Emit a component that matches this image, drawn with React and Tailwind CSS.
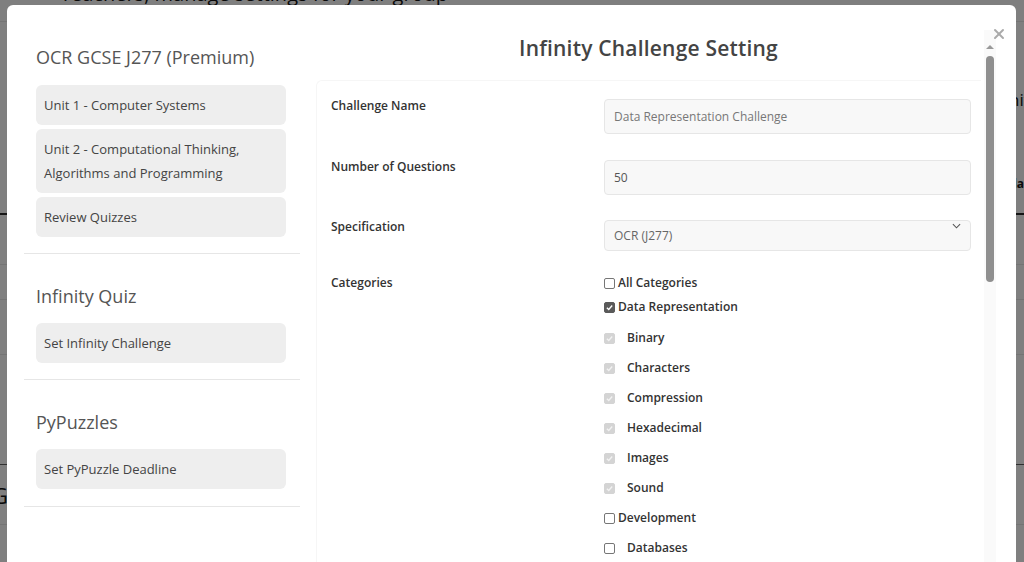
import { X } from "lucide-react";

const font = { fontFamily: '"Open Sans", "Noto Sans", sans-serif' };

function SideButton({ children }) {
    return (
        <div className="bg-[#eeeeee] rounded-md px-2 py-[8px] text-[13px] leading-[24px] text-[#444]">
            {children}
        </div>
    );
}

function Check({ state }) {
    // state: "off" | "on" | "disabled"
    let box = "border border-[#767676] bg-white";
    if (state === "on") box = "bg-[#5a5a5a] border border-[#5a5a5a]";
    if (state === "disabled") box = "bg-[#d4d4d4] border border-[#d4d4d4]";
    return (
        <span className={`w-[11px] h-[11px] rounded-[2px] flex items-center justify-center shrink-0 ${box}`}>
            {state !== "off" && (
                <svg viewBox="0 0 12 12" className="w-[9px] h-[9px]">
                    <path d="M2.5 6.2 L5 8.6 L9.6 3.4" fill="none" stroke={state === "on" ? "#fff" : "#f2f2f2"} strokeWidth="1.8" />
                </svg>
            )}
        </span>
    );
}

function CategoryRow({ label, state, sub, className = "h-[24px]" }) {
    return (
        <label className={`flex items-center ${className}`}>
            <Check state={state} />
            <span className={`text-[12px] font-semibold text-[#333] ${sub ? "ml-[12px]" : "ml-[3px]"}`}>
                {label}
            </span>
        </label>
    );
}

function Field({ label, children }) {
    return (
        <div className="flex items-start">
            <div className="w-[273px] text-[12px] leading-[14px] font-semibold text-[#333]">{label}</div>
            <div className="w-[367px]">{children}</div>
        </div>
    );
}

export default function App() {
    const subs = ["Binary", "Characters", "Compression", "Hexadecimal", "Images", "Sound"];

    return (
        <div className="relative w-[1024px] h-[562px] overflow-hidden bg-[#7f7f7f]" style={font}>
            {/* dimmed page behind the modal, each band painted grey */}
            <div className="h-[562px] overflow-hidden text-[#0a0a0a] flex flex-col">
                <div className="h-[22px] shrink-0 bg-[#7f7f7f] border-b border-[#747474] overflow-hidden">
                    <div className="px-[60px] -mt-[16px] text-[20px] leading-[20px]">
                        Teachers, manage settings for your group
                    </div>
                </div>
                <div className="h-[193px] shrink-0 bg-[#7f7f7f] border-b-2 border-[#151515] flex flex-col items-end">
                    <div className="mt-[66px] -mr-[14px] text-[17px] leading-[24px]">Units</div>
                    <div className="mt-[64px] -mr-[12px] text-[12px] font-bold leading-[16px]">Class</div>
                </div>
                <div className="h-[50px] shrink-0 bg-[#7f7f7f] border-b border-[#747474]" />
                <div className="h-[35px] shrink-0 bg-[#7f7f7f] border-b border-[#747474]" />
                <div className="h-[55px] shrink-0 bg-[#7f7f7f] border-b border-[#747474]" />
                <div className="h-[110px] shrink-0 bg-[#7f7f7f] border-b border-[#303030]" />
                <div className="h-[60px] shrink-0 bg-[#7f7f7f] border-b border-[#747474] flex items-center">
                    <span className="-ml-[8px] text-[22px] leading-[26px]">Group</span>
                </div>
                <div className="flex-1 bg-[#7f7f7f]" />
            </div>

            {/* modal */}
            <div className="absolute left-[7px] top-[5px] w-[1009px] h-[600px] bg-white rounded-t-md flex">
                {/* sidebar */}
                <aside className="w-[293px] pl-[17px] pt-[38px]">
                    <div className="border-b border-[#e6e6e6] pb-[16px]">
                        <h3 className="pl-[12px] text-[18px] text-[#555] leading-[28px]">OCR GCSE J277 (Premium)</h3>
                        <div className="pl-[12px] pr-[14px] mt-[14px] flex flex-col gap-[4px]">
                            <SideButton>Unit 1 - Computer Systems</SideButton>
                            <SideButton>
                                Unit 2 - Computational Thinking,
                                <br />
                                Algorithms and Programming
                            </SideButton>
                            <SideButton>Review Quizzes</SideButton>
                        </div>
                    </div>
                    <div className="border-b border-[#e6e6e6] pt-[28px] pb-[16px]">
                        <h3 className="pl-[12px] text-[18px] text-[#555] leading-[28px]">Infinity Quiz</h3>
                        <div className="pl-[12px] pr-[14px] mt-[13px]">
                            <SideButton>Set Infinity Challenge</SideButton>
                        </div>
                    </div>
                    <div className="border-b border-[#e6e6e6] pt-[28px] pb-[17px]">
                        <h3 className="pl-[12px] text-[18px] text-[#555] leading-[28px]">PyPuzzles</h3>
                        <div className="pl-[12px] pr-[14px] mt-[13px]">
                            <SideButton>Set PyPuzzle Deadline</SideButton>
                        </div>
                    </div>
                </aside>

                {/* main */}
                <main className="relative flex-1 pl-[16px] pr-[35px]">
                    <h2 className="pt-[27px] text-center text-[21px] font-semibold text-[#444] leading-[32px] tracking-[0.2px]">
                        Infinity Challenge Setting
                    </h2>
                    <div className="mt-[16px] border-t border-l border-[#f6f6f6] rounded-tl-md pl-[14px] pt-[18px] flex flex-col">
                        <Field label="Challenge Name">
                            <div className="h-[35px] bg-[#f8f8f8] border border-[#e6e6e6] rounded-[4px] pl-[9px] flex items-center text-[12px] text-[#777]">
                                Data Representation Challenge
                            </div>
                        </Field>
                        <div className="mt-[26px]">
                            <Field label="Number of Questions">
                                <div className="h-[35px] bg-[#f8f8f8] border border-[#e6e6e6] rounded-[4px] pl-[9px] flex items-center text-[12px] text-[#555]">
                                    50
                                </div>
                            </Field>
                        </div>
                        <div className="mt-[25px]">
                            <Field label="Specification">
                                <div className="relative h-[31px] bg-[#f8f8f8] border border-[#e6e6e6] rounded-[4px] pl-[9px] flex items-center text-[12px] text-[#666]">
                                    OCR (J277)
                                    <svg viewBox="0 0 10 6" className="absolute right-[9px] top-[2px] w-[9px] h-[6px]">
                                        <path d="M1 1 L5 5 L9 1" fill="none" stroke="#555" strokeWidth="1.2" />
                                    </svg>
                                </div>
                            </Field>
                        </div>
                        <div className="mt-[25px]">
                            <Field label="Categories">
                                <div className="-mt-[5px]">
                                    <CategoryRow label="All Categories" state="off" />
                                    <CategoryRow label="Data Representation" state="on" />
                                    <div className="mt-[4px]">
                                        {subs.map((s) => (
                                            <CategoryRow key={s} label={s} state="disabled" sub className="h-[30px]" />
                                        ))}
                                    </div>
                                    <CategoryRow label="Development" state="off" className="h-[30px]" />
                                    <CategoryRow label="Databases" state="off" sub className="h-[30px]" />
                                </div>
                            </Field>
                        </div>
                    </div>

                    {/* scrollbar */}
                    <div className="absolute right-[20px] top-[25px] bottom-0 w-[12px] bg-[#fafafa] flex flex-col items-center">
                        <span className="mt-[15px] w-0 h-0 border-x-[4px] border-x-transparent border-b-[4px] border-b-[#999]" />
                        <span className="mt-[7px] w-[8px] h-[226px] rounded-full bg-[#8f8f8f]" />
                    </div>
                    <button className="absolute right-[9px] top-[21px] text-[#aaa]">
                        <X size={16} strokeWidth={3} />
                    </button>
                </main>
            </div>
        </div>
    );
}
